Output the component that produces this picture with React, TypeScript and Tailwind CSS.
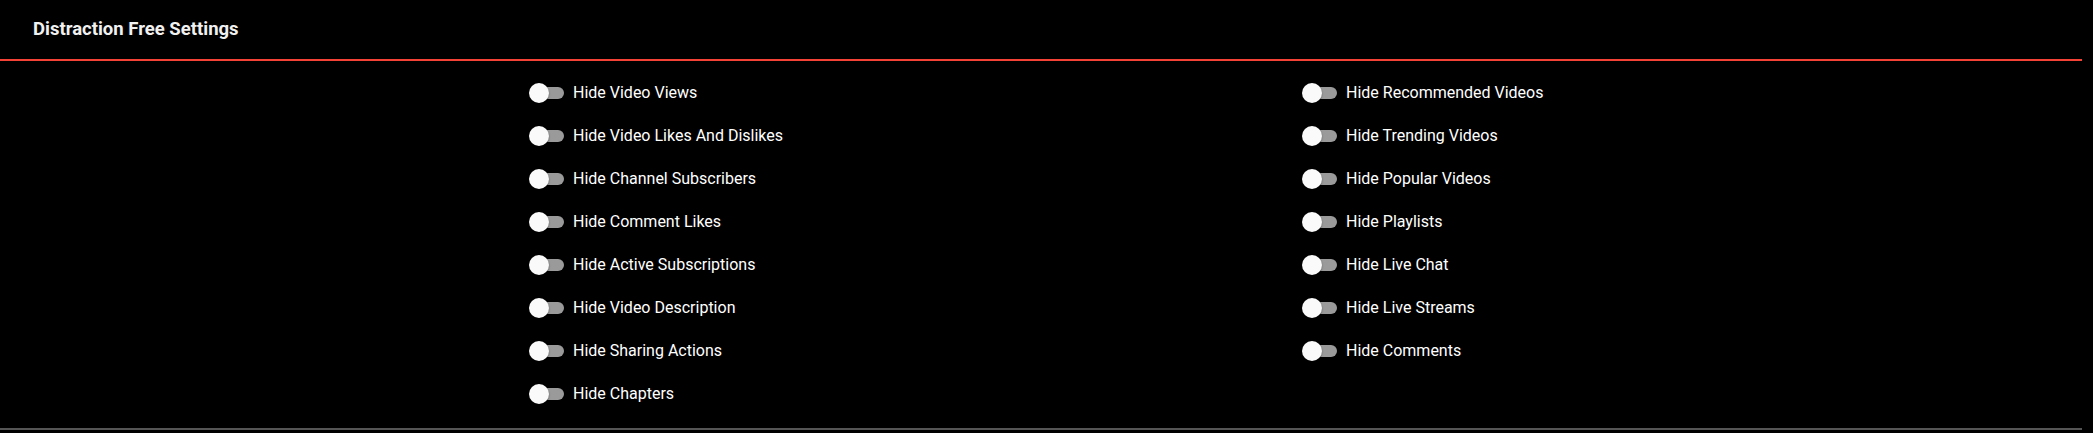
import React from "react";

const left = [
  "Hide Video Views",
  "Hide Video Likes And Dislikes",
  "Hide Channel Subscribers",
  "Hide Comment Likes",
  "Hide Active Subscriptions",
  "Hide Video Description",
  "Hide Sharing Actions",
  "Hide Chapters",
];
const right = [
  "Hide Recommended Videos",
  "Hide Trending Videos",
  "Hide Popular Videos",
  "Hide Playlists",
  "Hide Live Chat",
  "Hide Live Streams",
  "Hide Comments",
];

function Row({ label }: { label: string }) {
  return (
    <div className="flex h-[43px] items-center">
      <div className="relative h-[20px] w-[36px] shrink-0">
        <div className="absolute left-[2px] top-[4px] h-[12px] w-[33px] rounded-full bg-[#9a9a9a]" />
        <div className="absolute left-0 top-0 h-[20px] w-[20px] rounded-full bg-[#fafafa] shadow-[0_1px_2px_rgba(0,0,0,0.4)]" />
      </div>
      <span className="ml-[8px] text-[16px] leading-none text-white">{label}</span>
    </div>
  );
}

export default function App() {
  return (
    <div
      className="h-[433px] w-[2093px] bg-black"
      style={{ fontFamily: "Roboto, 'Liberation Sans', sans-serif" }}
    >
      <div className="w-[2082px]">
        <div className="flex h-[61px] items-center border-b-2 border-[#f44336] pl-[33px]">
          <h1 className="text-[18.5px] font-bold text-[#f1f1f1]">Distraction Free Settings</h1>
        </div>
        <div className="flex border-b-2 border-[#555555] pb-[13px] pl-[529px] pt-[10px]">
          <div className="flex w-[773px] flex-col">
            {left.map((l) => (
              <Row key={l} label={l} />
            ))}
          </div>
          <div className="flex flex-col">
            {right.map((l) => (
              <Row key={l} label={l} />
            ))}
          </div>
        </div>
      </div>
    </div>
  );
}
